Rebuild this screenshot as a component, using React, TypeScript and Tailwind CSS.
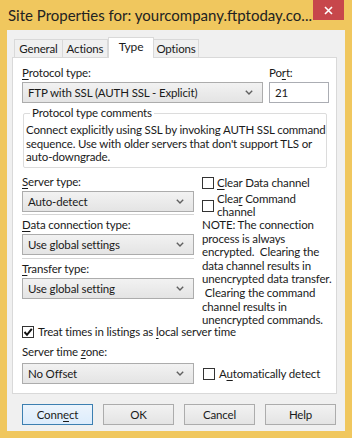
import React from 'react';

const body = "font-['Lato','Liberation_Sans',sans-serif] text-[11.5px] tracking-[-0.15px] leading-[14px]";

function Chevron() {
  return (
    <svg width="8" height="5" viewBox="0 0 8 5" className="shrink-0">
      <path d="M0.8 0.8 L4 4 L7.2 0.8" fill="none" stroke="#606060" strokeWidth="1.4" />
    </svg>
  );
}

function Select({ value, width }: { value: string; width: string }) {
  return (
    <div
      className={`${width} h-[21px] flex items-center justify-between pl-[5px] pr-[9px] border border-[#acacac] bg-gradient-to-b from-[#f2f2f2] to-[#e4e4e4] text-[#1a1a1a] whitespace-nowrap`}
    >
      <span>{value}</span>
      <Chevron />
    </div>
  );
}

function Check({ checked }: { checked?: boolean }) {
  return (
    <div className="w-[12px] h-[12px] border border-[#333] bg-white flex items-center justify-center shrink-0">
      {checked && (
        <svg width="10" height="10" viewBox="0 0 10 10">
          <path d="M1.5 5 L4 7.8 L8.8 1.8" fill="none" stroke="#111" strokeWidth="2" />
        </svg>
      )}
    </div>
  );
}

function U({ children }: { children: React.ReactNode }) {
  return <span className="underline underline-offset-[1.5px]">{children}</span>;
}

function Button({ children, def }: { children: React.ReactNode; def?: boolean }) {
  return (
    <div
      className={`w-[71px] h-[21px] flex items-center justify-center border ${
        def
          ? 'border-[#3c7fb1] bg-gradient-to-b from-[#ecf4fc] to-[#dcecfc]'
          : 'border-[#acacac] bg-gradient-to-b from-[#f2f2f2] to-[#e4e4e4]'
      }`}
    >
      {children}
    </div>
  );
}

export default function App() {
  return (
    <div className="w-[352px] h-[438px] bg-[#f0c75e] text-[#1a1a1a] overflow-hidden">
      {/* Title bar */}
      <div className="h-[30px] flex items-start justify-between pl-[8px] pr-[8px]">
        <div className="font-['Lato','Liberation_Sans',sans-serif] text-[15px] leading-[20px] text-[#222] mt-[5px] whitespace-nowrap">
          Site Properties for: yourcompany.ftptoday.co...
        </div>
        <div className="w-[31px] h-[20px] bg-[#c7474b] flex items-center justify-center shrink-0">
          <svg width="9" height="9" viewBox="0 0 9 9">
            <path d="M1 1 L8 8 M8 1 L1 8" stroke="white" strokeWidth="1.6" />
          </svg>
        </div>
      </div>

      {/* Client area */}
      <div className={`mx-[7px] h-[401px] bg-[#f0f0f0] pt-[7px] px-[5px] ${body}`}>
        {/* Tabs */}
        <div className="flex items-end h-[20px] pl-[2px]">
          <div className="w-[49px] h-[18px] flex items-center justify-center border border-b-0 border-[#d9d9d9] bg-[#f0f0f0]">General</div>
          <div className="w-[45px] h-[18px] flex items-center justify-center border border-b-0 border-l-0 border-[#d9d9d9] bg-[#f0f0f0]">Actions</div>
          <div className="w-[46px] h-[21px] flex items-start justify-center pt-[2px] border border-b-0 border-[#d9d9d9] bg-white -mb-px relative z-10 text-[12px]">Type</div>
          <div className="w-[45px] h-[18px] flex items-center justify-center border border-b-0 border-l-0 border-[#d9d9d9] bg-[#f0f0f0]">Options</div>
        </div>

        {/* Panel */}
        <div className="w-[325px] h-[337px] bg-white border border-[#d9d9d9] pl-[9px] pr-[8px]">
          <div className="flex gap-[6px] mt-[8px]">
            <div className="flex flex-col">
              <div className="h-[14px]"><U>P</U>rotocol type:</div>
              <div className="mt-[2px]">
                <Select value="FTP with SSL (AUTH SSL - Explicit)" width="w-[241px]" />
              </div>
            </div>
            <div className="flex flex-col">
              <div className="h-[14px]">Po<U>r</U>t:</div>
              <div className="mt-[2px] w-[60px] h-[21px] border border-[#abadb3] bg-white flex items-center pl-[5px]">21</div>
            </div>
          </div>

          {/* Group box */}
          <div className="relative mt-[10px] ml-[1px] w-[304px] h-[55px] border border-[#dcdcdc] rounded-[2px] pt-[9px] pl-[2px] leading-[13.5px] whitespace-nowrap">
            <div className="absolute -top-[8px] left-[6px] bg-white px-[2px] leading-[14px]">Protocol type comments</div>
            <div>Connect explicitly using SSL by invoking AUTH SSL command</div>
            <div>sequence. Use with older servers that don't support TLS or</div>
            <div>auto-downgrade.</div>
          </div>

          {/* Two columns */}
          <div className="flex h-[150px] mt-[7px]">
            <div className="w-[172px] flex flex-col">
              <div className="h-[14px]"><U>S</U>erver type:</div>
              <div className="mt-[2px]"><Select value="Auto-detect" width="w-[172px]" /></div>
              <div className="h-px bg-[#d5d5d5] mt-[2px]" />
              <div className="h-[14px] mt-[3px]"><U>D</U>ata connection type:</div>
              <div className="mt-[2px]"><Select value="Use global settings" width="w-[172px]" /></div>
              <div className="h-px bg-[#d5d5d5] mt-[3px]" />
              <div className="h-[14px] mt-[3px]"><U>T</U>ransfer type:</div>
              <div className="mt-[2px]"><Select value="Use global setting" width="w-[172px]" /></div>
            </div>
            <div className="ml-[8px] flex-1 flex flex-col">
              <div className="flex items-center gap-[3px] mt-[1px]">
                <Check />
                <span><U>C</U>lear Data channel</span>
              </div>
              <div className="flex items-center gap-[3px] mt-[3px]">
                <Check />
                <span className="leading-[12.5px]">Clea<U>r</U> Command<br />channel</span>
              </div>
              <div className="leading-[13.6px] whitespace-pre">
                {"NOTE: The connection\nprocess is always\nencrypted.  Clearing the\ndata channel results in\nunencrypted data transfer.\n Clearing the command\nchannel results in\nunencrypted commands."}
              </div>
            </div>
          </div>

          <div className="flex items-center gap-[4px] h-[14px]">
            <Check checked />
            <span className="leading-[10px]">Treat times in listings as <U>l</U>ocal server time</span>
          </div>
          <div className="mt-[6px] h-[14px]">Server time <U>z</U>one:</div>
          <div className="flex items-center mt-[4px]">
            <Select value="No Offset" width="w-[172px]" />
            <div className="flex items-center gap-[4px] ml-[9px]">
              <Check />
              <span>A<U>u</U>tomatically detect</span>
            </div>
          </div>
        </div>

        {/* Buttons */}
        <div className="flex gap-[10px] mt-[10px] pl-[10px]">
          <Button def>Conn<U>e</U>ct</Button>
          <Button>OK</Button>
          <Button>Cancel</Button>
          <Button>Help</Button>
        </div>
      </div>
    </div>
  );
}
